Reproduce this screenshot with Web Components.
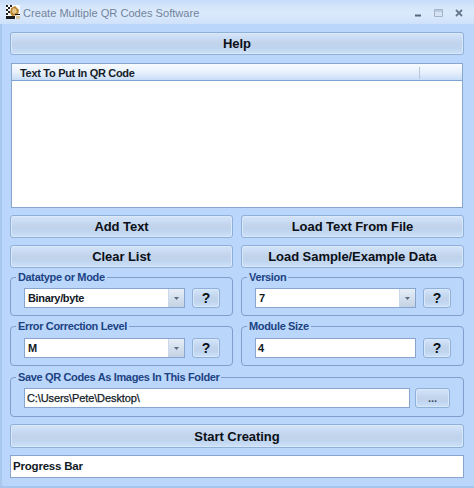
<!DOCTYPE html>
<html lang="en">

<head>
  <meta charset="UTF-8">
  <title>Create Multiple QR Codes Software</title>
  <style>
    html, body { margin: 0; height: 100%; background: #bad6fa; }
    body { font-family: "Liberation Sans", Arial, sans-serif; }
  </style>
  <script>
    // small helper, every element has the same shape: style + markup in an open root
    function define(name, html, init) {
      customElements.define(name, class extends HTMLElement {
        constructor() {
          super();
          this.attachShadow({ mode: 'open' }).innerHTML = html;
        }
        connectedCallback() { if (init) init(this); }
      });
    }

    define('title-bar', `
      <style>
        :host { display: flex; align-items: center; height: 24px; box-sizing: border-box; padding: 0 11px 0 6px;
          background: linear-gradient(#c6dcf8 0, #d4e5fb 6px, #dbe9fc 13px, #cfe2fa 24px);
          color: #71849b; font-size: 11px; }
        svg { flex: none; }
        .t { margin-left: 3px; flex: 1; padding-top: 1px; font-size: 11.1px; }
        .c { display: flex; align-items: center; padding-top: 2px; }
        .c svg:nth-child(2) { margin: 0 12px 0 11px; }
      </style>
      <svg width="14" height="14" viewBox="0 0 14 14">
        <rect width="14" height="14" fill="#fff"/>
        <path d="M0 0h2v2H0zM4 0h2v2H4zM0 4h2v2H0zM2 2h2v2H2zM0 8h2v2H0zM2 6h2v2H2z" fill="#222"/>
        <path d="M5 3l4-2 4 4-1 5-6 1-2-3z" fill="#b98532"/>
        <path d="M7 3l3 1 1 3-3 2-2-2z" fill="#e8c98c"/>
        <path d="M0 11h9v3H0zM9 9h5v1H9z" fill="#1c1c1c"/>
        <path d="M10 11h4v3h-4z" fill="#d9c39a"/>
      </svg>
      <span class="t"><slot></slot></span>
      <span class="c">
        <svg width="9" height="8" viewBox="0 0 9 8"><path d="M1 6.500h6" stroke="#54677f" stroke-width="2"/></svg>
        <svg width="9" height="8" viewBox="0 0 9 8"><path d="M.5.5h8v7h-8z" fill="#d5e3f5" stroke="#a3b4c8"/><path d="M1 2h7" stroke="#a3b4c8"/></svg>
        <svg width="8" height="8" viewBox="0 0 8 8"><path d="M1 1l6 6M7 1L1 7" stroke="#66798f" stroke-width="1.8"/></svg>
      </span>
    `);

    // gradient button, the big ones and the small ? / ... ones use the same look
    define('soft-button', `
      <style>
        :host { display: flex; align-items: center; justify-content: center; box-sizing: border-box; height: 23px;
          border: 1px solid #8fb0d8; border-radius: 3px; color: #0b0f16; font-size: 13px; font-weight: bold;
          letter-spacing: -.05px;
          background: linear-gradient(#d5e5f9 0, #c9dcf3 25%, #c1d3ea 50%, #bfd4ee 70%, #cde1fa 100%);
          box-shadow: inset 0 0 0 1px #d9e8fb; }
        :host([small]) { width: 28px; height: 20px; font-size: 14px; flex: none; }
        :host([dots]) { width: 35px; font-size: 11px; color: #3b4a5c; }
      </style>
      <slot></slot>
    `);

    define('list-box', `
      <style>
        :host { display: block; height: 145px; box-sizing: border-box; border: 1px solid #86a5cf; background: #fff; }
        .h { display: flex; height: 17px; align-items: center; box-sizing: border-box; padding: 1px 0 0 8px;
          border-bottom: 1px solid #7ea2d2; color: #151c28; font-size: 11px; letter-spacing: -.3px; font-weight: bold;
          background: linear-gradient(#f7fbff, #e8f1fc 50%, #c9ddf7); }
        .n { flex: 1; }
        .s { width: 1px; height: 12px; background: #b8c6d8; margin-right: 42px; }
      </style>
      <div class="h"><span class="n"><slot></slot></span><span class="s"></span></div>
    `);

    // group box, the label sits over the top border line
    define('group-box', `
      <style>
        :host { display: flex; align-items: flex-start; gap: 7px; position: relative; box-sizing: border-box;
          border: 1px solid #7f9ecb; border-radius: 4px; padding: 10px 13px 0; }
        :host([low]) { padding-top: 11px; }
        .l { position: absolute; left: 5px; top: -7px; padding: 0 2px; background: #bad6fa; color: #1c4384;
          font-size: 11px; letter-spacing: -.35px; line-height: 13px; font-weight: bold; }
      </style>
      <span class="l"></span><slot></slot>
    `, el => { el.shadowRoot.querySelector('.l').textContent = el.getAttribute('label'); });

    define('combo-box', `
      <style>
        :host { display: flex; box-sizing: border-box; width: 161px; height: 20px; flex: none; border: 1px solid #87a5cf;
          background: #fff; color: #121a26; font-size: 11px; letter-spacing: -.35px; font-weight: bold; }
        .v { flex: 1; padding-left: 3px; line-height: 18px; }
        .a { width: 15px; display: flex; align-items: center; justify-content: center;
          background: linear-gradient(#e6eef8, #c4d2e3); border-left: 1px solid #c9d8ea; }
      </style>
      <span class="v"><slot></slot></span>
      <span class="a"><svg width="5" height="3" viewBox="0 0 5 3"><path d="M0 0h5L2.500 3z" fill="#5a6b80"/></svg></span>
    `);

    define('text-field', `
      <style>
        :host { display: block; box-sizing: border-box; width: 161px; height: 20px; flex: none; border: 1px solid #87a5cf;
          background: #fff; color: #121a26; font-size: 11px; letter-spacing: -.2px; font-weight: bold; padding-left: 2px; line-height: 18px; }
        :host([wide]) { width: 386px; font-weight: normal; letter-spacing: -.1px; -webkit-text-stroke: .25px #121a26; }
        :host([bar]) { width: auto; height: 23px; line-height: 21px; font-size: 11.5px; letter-spacing: -.2px; }
      </style>
      <slot></slot>
    `);

    define('main-window', `
      <style>
        :host { display: block; height: 488px; box-sizing: border-box; border-bottom: 2px solid #a6c5ec; }
        .b { display: grid; grid-template-columns: 223px 223px; column-gap: 8px; padding: 8px 10px 0 8px;
          border-left: 2px solid #a9c8ee; height: 462px; box-sizing: border-box; align-content: start; }
        ::slotted(.w) { grid-column: 1 / 3; }
      </style>
      <slot name="bar"></slot>
      <div class="b"><slot></slot></div>
    `);
  </script>
</head>

<body>
  <main-window>
    <title-bar slot="bar">Create Multiple QR Codes Software</title-bar>
    <soft-button class="w" style="margin-bottom:8px">Help</soft-button>
    <list-box class="w" style="margin-left:1px;margin-right:1px;margin-bottom:7px">Text To Put In QR Code</list-box>
    <soft-button style="margin-bottom:7px">Add Text</soft-button>
    <soft-button style="margin-bottom:7px">Load Text From File</soft-button>
    <soft-button style="margin-bottom:9px">Clear List</soft-button>
    <soft-button style="margin-bottom:9px">Load Sample/Example Data</soft-button>
    <group-box label="Datatype or Mode" style="height:39px;margin-bottom:10px">
      <combo-box>Binary/byte</combo-box><soft-button small>?</soft-button>
    </group-box>
    <group-box label="Version" style="height:39px;margin-bottom:10px">
      <combo-box>7</combo-box><soft-button small>?</soft-button>
    </group-box>
    <group-box low label="Error Correction Level" style="height:40px;margin-bottom:11px">
      <combo-box>M</combo-box><soft-button small>?</soft-button>
    </group-box>
    <group-box low label="Module Size" style="height:40px;margin-bottom:11px">
      <text-field>4</text-field><soft-button small>?</soft-button>
    </group-box>
    <group-box class="w" label="Save QR Codes As Images In This Folder" style="height:40px;margin-bottom:7px;gap:5px">
      <text-field wide>C:\Users\Pete\Desktop\</text-field><soft-button small dots>...</soft-button>
    </group-box>
    <soft-button class="w" style="height:24px;margin-bottom:7px">Start Creating</soft-button>
    <text-field class="w" bar>Progress Bar</text-field>
  </main-window>
</body>

</html>
